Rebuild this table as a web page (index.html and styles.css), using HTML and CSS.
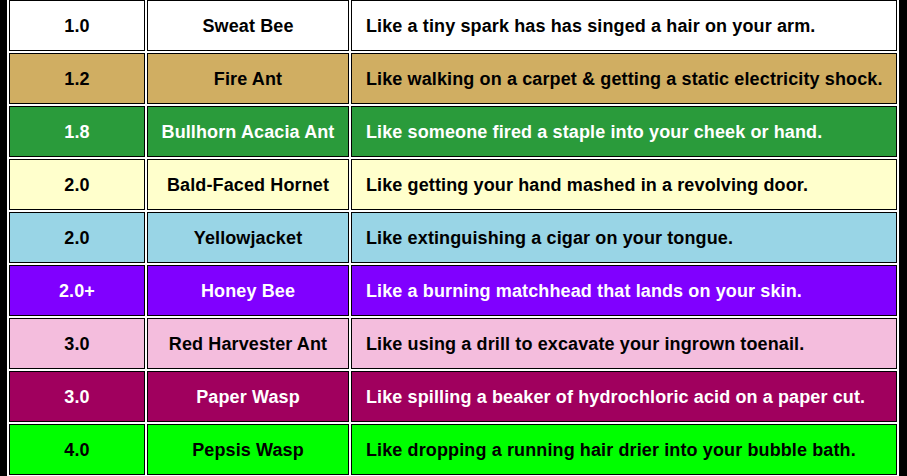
FILE: index.html
```html
<!DOCTYPE html>
<html>
<head>
<meta charset="utf-8">
<link rel="stylesheet" href="styles.css">
</head>
<body>
<div class="frame">
<table class="pain">
  <colgroup><col class="c1"><col class="c2"><col class="c3"></colgroup>
  <tr class="white"><td>1.0</td><td>Sweat Bee</td><td>Like a tiny spark has has singed a hair on your arm.</td></tr>
  <tr class="tan"><td>1.2</td><td>Fire Ant</td><td>Like walking on a carpet &amp; getting a static electricity shock.</td></tr>
  <tr class="green"><td>1.8</td><td>Bullhorn Acacia Ant</td><td>Like someone fired a staple into your cheek or hand.</td></tr>
  <tr class="yellow"><td>2.0</td><td>Bald-Faced Hornet</td><td>Like getting your hand mashed in a revolving door.</td></tr>
  <tr class="blue"><td>2.0</td><td>Yellowjacket</td><td>Like extinguishing a cigar on your tongue.</td></tr>
  <tr class="purple"><td>2.0+</td><td>Honey Bee</td><td>Like a burning matchhead that lands on your skin.</td></tr>
  <tr class="pink"><td>3.0</td><td>Red Harvester Ant</td><td>Like using a drill to excavate your ingrown toenail.</td></tr>
  <tr class="magenta"><td>3.0</td><td>Paper Wasp</td><td>Like spilling a beaker of hydrochloric acid on a paper cut.</td></tr>
  <tr class="lime"><td>4.0</td><td>Pepsis Wasp</td><td>Like dropping a running hair drier into your bubble bath.</td></tr>
</table>
</div>
</body>
</html>
```

FILE: styles.css
```css
html, body {
  margin: 0;
  padding: 0;
  background: #000;
  overflow: hidden;
}
.frame {
  margin-left: 7px;
  width: 892px;
  height: 476px;
  background: #fff;
  overflow: hidden;
}
.pain {
  margin-top: -2px;
  border-collapse: separate;
  border-spacing: 2px;
  table-layout: fixed;
  width: 892px;
  font-family: "Liberation Sans", Arial, sans-serif;
  font-weight: bold;
  font-size: 18px;
  letter-spacing: 0.12px;
}
.c1 { width: 136px; }
.c2 { width: 202px; }
.c3 { width: 546px; }
.pain td {
  border: 1px solid #000;
  height: 51px;
  padding: 2px 0 0 0;
  text-align: center;
  vertical-align: middle;
  box-sizing: border-box;
  white-space: nowrap;
}
.pain td:nth-child(3) {
  text-align: left;
  padding-left: 14px;
}
.white td { background: #fff; color: #000; }
.tan td { background: #d0ae62; color: #000; }
.green td { background: #2a9b3b; color: #fff; }
.yellow td { background: #ffffcc; color: #000; }
.blue td { background: #99d5e6; color: #000; }
.purple td { background: #8000ff; color: #fff; }
.pink td { background: #f4bddd; color: #000; }
.magenta td { background: #a0005e; color: #fff; }
.lime td { background: #00ff00; color: #000; }
```
